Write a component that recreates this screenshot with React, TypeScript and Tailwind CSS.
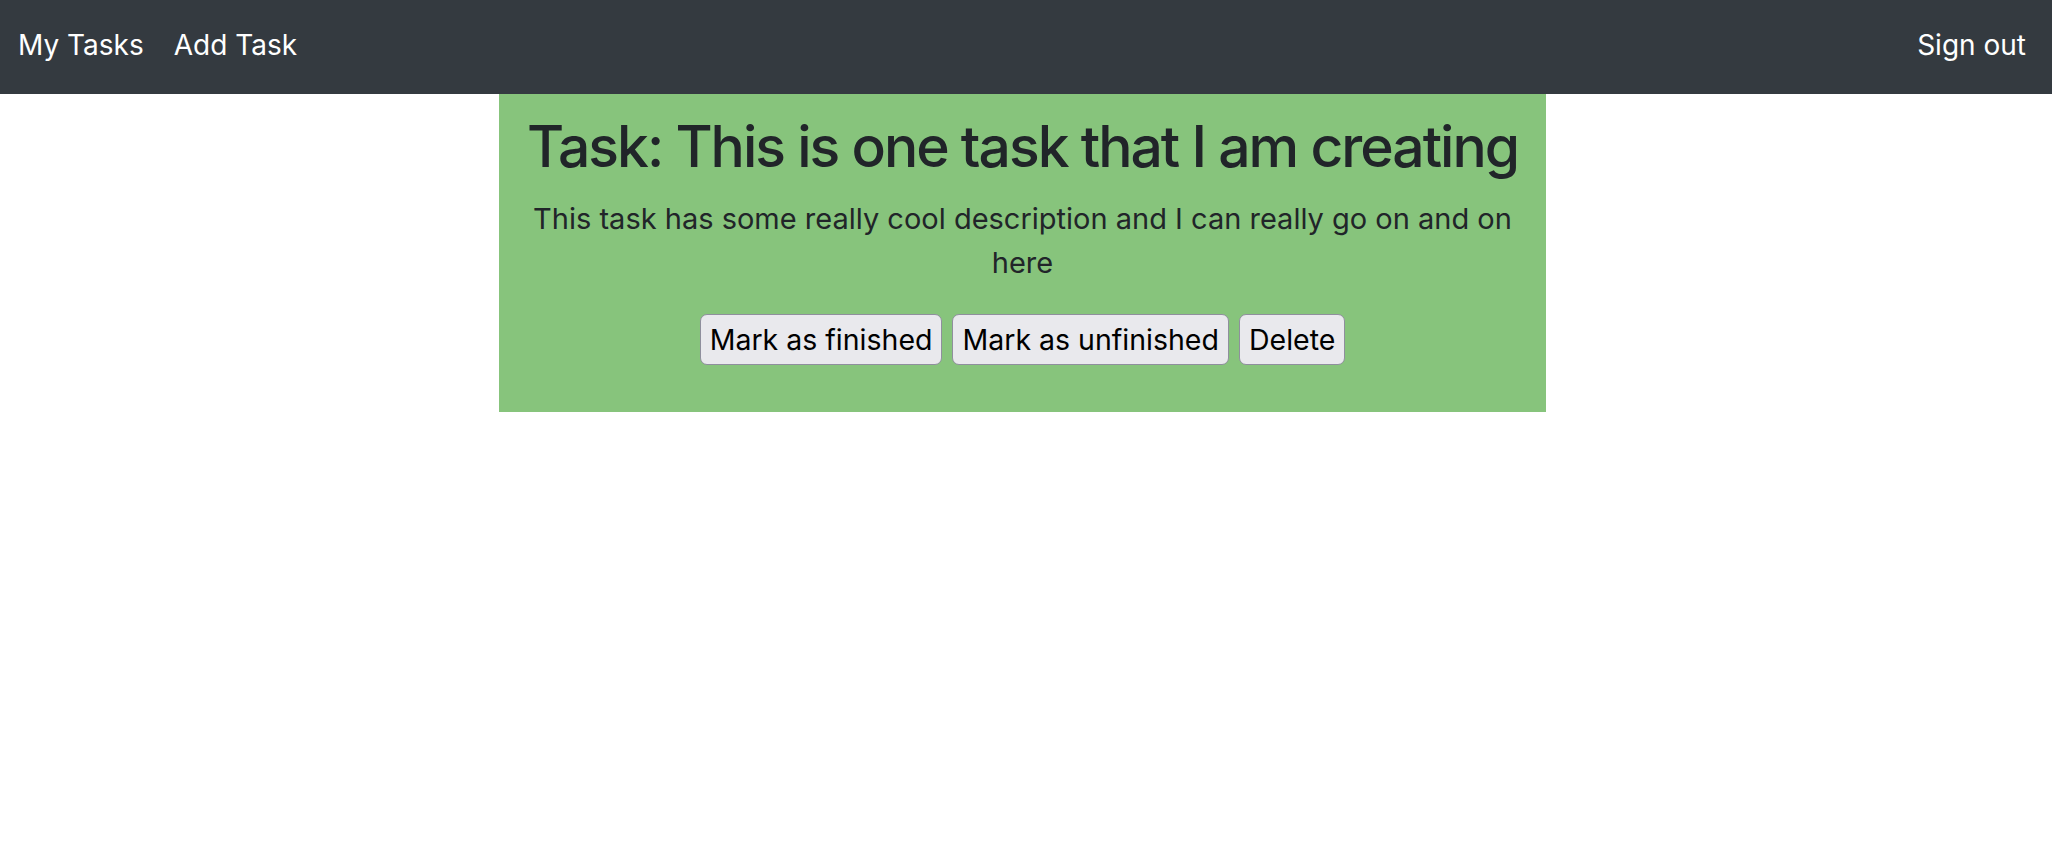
import React from "react";

export default function App() {
  return (
    <div className="min-h-[850px] bg-white" style={{ fontFamily: "Inter, 'Noto Sans', sans-serif" }}>
      <nav className="flex h-[94px] items-center justify-between bg-[#343a40] pb-[5px] pl-[18px] pr-[26px] text-[28px] text-white">
        <div className="flex items-center gap-[30px]">
          <a>My Tasks</a>
          <a>Add Task</a>
        </div>
        <a>Sign out</a>
      </nav>
      <div className="flex justify-center pr-[7px]">
        <div className="w-[1047px] bg-[#87c47c] pt-[19px] pb-[47px] text-center text-[#212529]">
          <h1 className="mb-[16px] text-[57px] font-medium leading-[1.2] tracking-[-0.035em]">Task: This is one task that I am creating</h1>
          <p className="mb-[30px] px-[24px] text-[29px] leading-[1.5]">
            This task has some really cool description and I can really go on and on here
          </p>
          <div className="flex justify-center gap-[10px]">
            <button className="h-[51px] rounded-[7px] border border-[#8f8f9d] bg-[#e9e9ed] px-[9px] text-[28.5px] text-black">Mark as finished</button>
            <button className="h-[51px] rounded-[7px] border border-[#8f8f9d] bg-[#e9e9ed] px-[9px] text-[28.5px] text-black">Mark as unfinished</button>
            <button className="h-[51px] rounded-[7px] border border-[#8f8f9d] bg-[#e9e9ed] px-[9px] text-[28.5px] text-black">Delete</button>
          </div>
        </div>
      </div>
    </div>
  );
}
